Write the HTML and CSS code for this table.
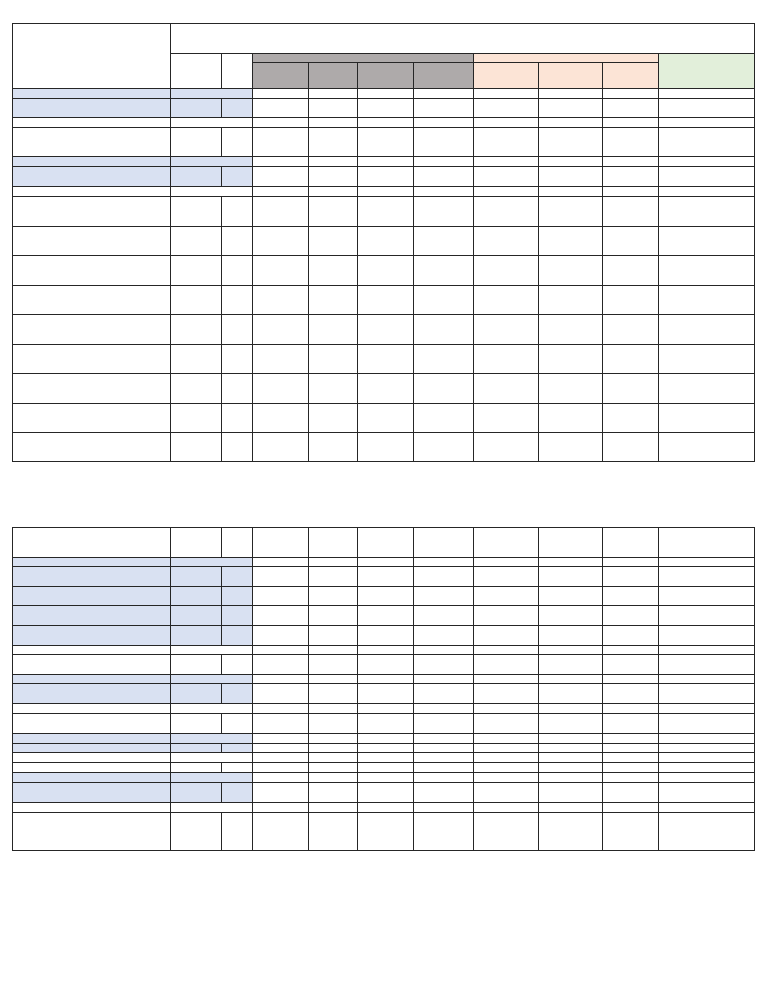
FILE: index.html
```
<!DOCTYPE html>
<html>
<head>
<meta charset="utf-8">
<link rel="stylesheet" href="styles.css">
</head>
<body>
<div class="sheet">
  <div class="grid top">
    <div class="hc r3"></div><div class="span10"></div>
    <div class="r2"></div><div class="r2"></div><div class="gray s4"></div><div class="peach s3"></div><div class="green r2"></div>
    <div class="gray"></div><div class="gray"></div><div class="gray"></div><div class="gray"></div><div class="peach"></div><div class="peach"></div><div class="peach"></div>

    <div class="b"></div><div class="b m"></div><div></div><div></div><div></div><div></div><div></div><div></div><div></div><div></div>
    <div class="b"></div><div class="b"></div><div class="b"></div><div></div><div></div><div></div><div></div><div></div><div></div><div></div><div></div>
    <div></div><div class="m"></div><div></div><div></div><div></div><div></div><div></div><div></div><div></div><div></div>
    <div></div><div></div><div></div><div></div><div></div><div></div><div></div><div></div><div></div><div></div><div></div>
    <div class="b"></div><div class="b m"></div><div></div><div></div><div></div><div></div><div></div><div></div><div></div><div></div>
    <div class="b"></div><div class="b"></div><div class="b"></div><div></div><div></div><div></div><div></div><div></div><div></div><div></div><div></div>
    <div></div><div class="m"></div><div></div><div></div><div></div><div></div><div></div><div></div><div></div><div></div>
    <div></div><div></div><div></div><div></div><div></div><div></div><div></div><div></div><div></div><div></div><div></div>
    <div></div><div></div><div></div><div></div><div></div><div></div><div></div><div></div><div></div><div></div><div></div>
    <div></div><div></div><div></div><div></div><div></div><div></div><div></div><div></div><div></div><div></div><div></div>
    <div></div><div></div><div></div><div></div><div></div><div></div><div></div><div></div><div></div><div></div><div></div>
    <div></div><div></div><div></div><div></div><div></div><div></div><div></div><div></div><div></div><div></div><div></div>
    <div></div><div></div><div></div><div></div><div></div><div></div><div></div><div></div><div></div><div></div><div></div>
    <div></div><div></div><div></div><div></div><div></div><div></div><div></div><div></div><div></div><div></div><div></div>
    <div></div><div></div><div></div><div></div><div></div><div></div><div></div><div></div><div></div><div></div><div></div>
    <div></div><div></div><div></div><div></div><div></div><div></div><div></div><div></div><div></div><div></div><div></div>
  </div>

  <div class="grid bottom">
    <div></div><div></div><div></div><div></div><div></div><div></div><div></div><div></div><div></div><div></div><div></div>
    <div class="b"></div><div class="b m"></div><div></div><div></div><div></div><div></div><div></div><div></div><div></div><div></div>
    <div class="b"></div><div class="b"></div><div class="b"></div><div></div><div></div><div></div><div></div><div></div><div></div><div></div><div></div>
    <div class="b"></div><div class="b"></div><div class="b"></div><div></div><div></div><div></div><div></div><div></div><div></div><div></div><div></div>
    <div class="b"></div><div class="b"></div><div class="b"></div><div></div><div></div><div></div><div></div><div></div><div></div><div></div><div></div>
    <div class="b"></div><div class="b"></div><div class="b"></div><div></div><div></div><div></div><div></div><div></div><div></div><div></div><div></div>
    <div></div><div class="m"></div><div></div><div></div><div></div><div></div><div></div><div></div><div></div><div></div>
    <div></div><div></div><div></div><div></div><div></div><div></div><div></div><div></div><div></div><div></div><div></div>
    <div class="b"></div><div class="b m"></div><div></div><div></div><div></div><div></div><div></div><div></div><div></div><div></div>
    <div class="b"></div><div class="b"></div><div class="b"></div><div></div><div></div><div></div><div></div><div></div><div></div><div></div><div></div>
    <div></div><div class="m"></div><div></div><div></div><div></div><div></div><div></div><div></div><div></div><div></div>
    <div></div><div></div><div></div><div></div><div></div><div></div><div></div><div></div><div></div><div></div><div></div>
    <div class="b"></div><div class="b m"></div><div></div><div></div><div></div><div></div><div></div><div></div><div></div><div></div>
    <div class="b"></div><div class="b"></div><div class="b"></div><div></div><div></div><div></div><div></div><div></div><div></div><div></div><div></div>
    <div></div><div class="m"></div><div></div><div></div><div></div><div></div><div></div><div></div><div></div><div></div>
    <div></div><div></div><div></div><div></div><div></div><div></div><div></div><div></div><div></div><div></div><div></div>
    <div class="b"></div><div class="b m"></div><div></div><div></div><div></div><div></div><div></div><div></div><div></div><div></div>
    <div class="b"></div><div class="b"></div><div class="b"></div><div></div><div></div><div></div><div></div><div></div><div></div><div></div><div></div>
    <div></div><div class="m"></div><div></div><div></div><div></div><div></div><div></div><div></div><div></div><div></div>
    <div></div><div></div><div></div><div></div><div></div><div></div><div></div><div></div><div></div><div></div><div></div>
  </div>
</div>
</body>
</html>
```

FILE: styles.css
```
html, body {
  margin: 0;
  padding: 0;
  background: #ffffff;
  font-family: "Liberation Sans", Arial, sans-serif;
}

.sheet {
  padding: 23px 0 0 12px;
  display: flex;
  flex-direction: column;
  gap: 65px;
  align-items: flex-start;
}

.grid {
  display: grid;
  grid-template-columns: 157px 50px 30px 55px 48px 55px 59px 64px 63px 55px 95px;
  gap: 1px;
  padding: 1px;
  background: #262626;
  width: max-content;
}

.top {
  grid-template-rows: 29px 8px 25px 9px 18px 9px 28px 9px 19px 9px 29px 28px 29px 28px 29px 28px 29px 28px 28px;
}

.bottom {
  grid-template-rows: 29px 8px 19px 18px 19px 19px 8px 19px 8px 19px 9px 19px 9px 8px 9px 9px 9px 19px 9px 37px;
}

.grid > div {
  background: #ffffff;
}

.grid > .b {
  background: #d9e1f2;
}

.grid > .gray {
  background: #aeaaaa;
}

.grid > .peach {
  background: #fce4d6;
}

.grid > .green {
  background: #e2efda;
}

.m {
  grid-column: span 2;
}

.span10 {
  grid-column: span 10;
}

.s4 {
  grid-column: span 4;
}

.s3 {
  grid-column: span 3;
}

.r2 {
  grid-row: span 2;
}

.r3 {
  grid-row: span 3;
}
```
